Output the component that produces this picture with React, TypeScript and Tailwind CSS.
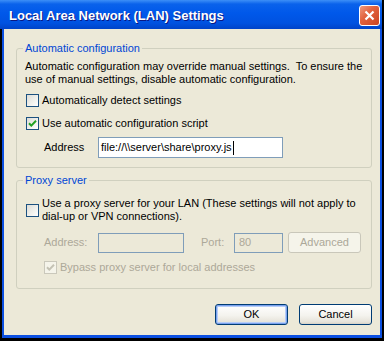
import React from "react";

function CheckBox({ checked, disabled }: { checked?: boolean; disabled?: boolean }) {
  return (
    <div
      className={
        disabled
          ? "w-[13px] h-[13px] border border-[#cac8bb] bg-[#f5f4ea] flex items-center justify-center shrink-0"
          : "w-[13px] h-[13px] border border-[#1c5180] bg-[linear-gradient(135deg,#dcdcd7_0%,#f2f2ee_60%,#ffffff_100%)] flex items-center justify-center shrink-0"
      }
    >
      {checked && (
        <svg width="11" height="11" viewBox="0 0 11 11">
          <path
            d="M2 5.2 L4.3 7.6 L9 2.8"
            fill="none"
            stroke={disabled ? "#c4c2b4" : "#21a121"}
            strokeWidth="2"
          />
        </svg>
      )}
    </div>
  );
}

function GroupBox({
  label,
  className,
  children,
}: {
  label: string;
  className: string;
  children: React.ReactNode;
}) {
  return (
    <div className={"relative border border-[#d0d0bf] rounded-[3px] " + className}>
      <div className="absolute left-[6px] -top-[8px] px-[2px] bg-[#ece9d8] text-[#0046d5] leading-[14px]">
        {label}
      </div>
      {children}
    </div>
  );
}

function XPButton({
  label,
  isDefault,
  disabled,
  className,
}: {
  label: string;
  isDefault?: boolean;
  disabled?: boolean;
  className: string;
}) {
  if (disabled) {
    return (
      <div
        className={
          "flex items-center justify-center rounded-[3px] border border-[#c9c7ba] bg-[#f5f4ea] text-[#aca899] " +
          className
        }
      >
        {label}
      </div>
    );
  }
  return (
    <div
      className={
        "flex items-center justify-center rounded-[3px] border border-[#003c74] bg-[linear-gradient(to_bottom,#ffffff_0%,#f4f3ee_55%,#e6e3d9_90%,#d6d0c5_100%)] text-black " +
        (isDefault ? "shadow-[inset_0_0_0_1px_#7aa1ee,inset_0_0_0_2px_#b6cdf7] " : "") +
        className
      }
    >
      {label}
    </div>
  );
}

export default function App() {
  return (
    <div className="w-[384px] h-[341px] bg-black font-['Liberation_Sans',Arial,sans-serif] text-[11px] text-black overflow-hidden">
      <div className="w-[382px] h-[338px] flex flex-col">
        {/* Title bar */}
        <div className="h-[29px] shrink-0 flex items-center justify-between pl-[9px] pr-[2px] bg-[linear-gradient(to_bottom,#3d8ff7_0%,#0a62eb_14%,#0058ea_45%,#0052e0_80%,#0043c8_100%)]">
          <span className="text-white font-bold text-[13px] leading-none [text-shadow:1px_1px_#0a1883] mt-[2px]">
            Local Area Network (LAN) Settings
          </span>
          <div className="w-[21px] h-[21px] rounded-[3px] border border-white bg-[linear-gradient(135deg,#ef9a7e_0%,#e2633f_40%,#cc4420_100%)] flex items-center justify-center mt-[2px]">
            <svg width="13" height="13" viewBox="0 0 13 13">
              <path d="M2.5 2.5 L10.5 10.5 M10.5 2.5 L2.5 10.5" stroke="white" strokeWidth="2.2" />
            </svg>
          </div>
        </div>

        {/* Body with frame */}
        <div className="flex-1 ml-[2px] border-l-2 border-r-2 border-b-[3px] border-[#0b4fe0] bg-[#ece9d8] pl-[12px] pr-[8px] pt-[19px] flex flex-col">
          <GroupBox label="Automatic configuration" className="h-[120px] pl-[8px] pr-[6px] pt-[11px]">
            <div className="leading-[13px]">
              Automatic configuration may override manual settings.&nbsp; To ensure the
              <br />
              use of manual settings, disable automatic configuration.
            </div>
            <div className="mt-[8px] h-[13px] flex items-center ml-[1px]">
              <CheckBox />
              <span className="ml-[3px]">Automatically detect settings</span>
            </div>
            <div className="mt-[10px] h-[13px] flex items-center ml-[1px]">
              <CheckBox checked />
              <span className="ml-[3px]">Use automatic configuration script</span>
            </div>
            <div className="mt-[7px] h-[21px] flex items-center ml-[19px]">
              <span className="w-[54px]">Address</span>
              <div className="w-[185px] h-[21px] border border-[#7f9db9] bg-white flex items-center pl-[2px]">
                <span>{"file://\\\\server\\share\\proxy.js"}</span>
                <span className="w-[1px] h-[14px] bg-black ml-[1px]" />
              </div>
            </div>
          </GroupBox>

          <GroupBox label="Proxy server" className="mt-[12px] h-[109px] pl-[8px] pr-[6px] pt-[16px]">
            <div className="flex items-center ml-[1px]">
              <CheckBox />
              <div className="ml-[3px] leading-[13px]">
                Use a proxy server for your LAN (These settings will not apply to
                <br />
                dial-up or VPN connections).
              </div>
            </div>
            <div className="mt-[9px] h-[21px] flex items-center ml-[19px] text-[#aca899]">
              <span className="w-[54px]">Address:</span>
              <div className="w-[86px] h-[20px] border border-[#7f9db9] bg-[#ece9d8]" />
              <span className="ml-[17px] w-[33px]">Port:</span>
              <div className="w-[49px] h-[20px] border border-[#7f9db9] bg-[#ece9d8] flex items-center pl-[4px]">
                80
              </div>
              <XPButton label="Advanced" disabled className="ml-[5px] w-[73px] h-[21px]" />
            </div>
            <div className="mt-[8px] h-[13px] flex items-center ml-[19px] text-[#aca899]">
              <CheckBox checked disabled />
              <span className="ml-[3px]">Bypass proxy server for local addresses</span>
            </div>
          </GroupBox>

          <div className="mt-[15px] flex justify-end gap-[11px]">
            <XPButton label="OK" isDefault className="w-[73px] h-[21px]" />
            <XPButton label="Cancel" className="w-[73px] h-[21px]" />
          </div>
        </div>
      </div>
    </div>
  );
}
